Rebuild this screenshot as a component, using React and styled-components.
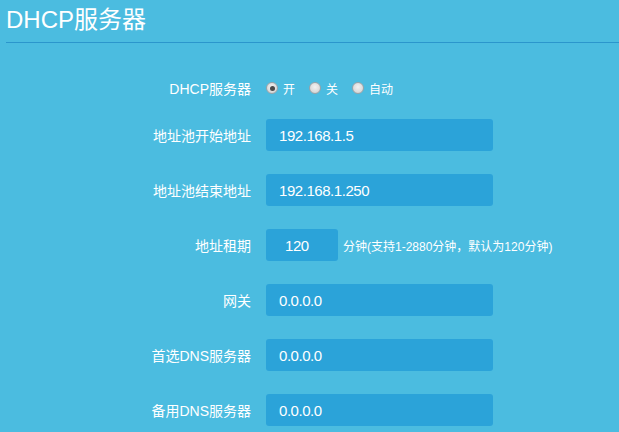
import React from "react";
import styled, { createGlobalStyle } from "styled-components";

const Global = createGlobalStyle`
  html, body { margin: 0; padding: 0; background: #4bbce0; }
  body { font-family: "Liberation Sans", "Noto Sans CJK SC", sans-serif; color: #fff; }
`;

const Page = styled.div`
  width: 619px;
  height: 432px;
  background: #4bbce0;
  overflow: hidden;
`;

const Header = styled.div`
  margin-left: 6px;
  height: 43px;
  border-bottom: 1px solid #2b96cc;
  box-sizing: border-box;
  display: flex;
  align-items: center;
`;

const Title = styled.h1`
  margin: 0;
  font-size: 24px;
  font-weight: normal;
  line-height: 1;
  padding-bottom: 3px;
  font-family: "Liberation Sans", "Noto Sans CJK SC", sans-serif;
`;

const Form = styled.div`
  display: flex;
  flex-direction: column;
  gap: 23px;
  padding-top: 29px;
`;

const Row = styled.div`
  display: grid;
  grid-template-columns: 251px 1fr;
  column-gap: 15px;
  align-items: center;
  height: 32px;
  margin-bottom: ${(p) => (p.$short ? "-8px" : "0")};
`;

const Label = styled.div`
  text-align: right;
  font-size: 14px;
  white-space: nowrap;
`;

const Field = styled.div`
  display: flex;
  align-items: center;
  gap: 5px;
`;

const Input = styled.div`
  box-sizing: border-box;
  width: ${(p) => p.$w}px;
  height: 32px;
  background: #2ba3d9;
  border-radius: 3px;
  display: flex;
  align-items: center;
  padding-left: ${(p) => p.$pl || 13}px;
  font-size: 15px;
  letter-spacing: -0.45px;
  color: #fff;
`;

const Hint = styled.span`
  font-size: 12px;
  white-space: nowrap;
`;

const RadioGroup = styled.div`
  display: flex;
  align-items: center;
`;

const RadioItem = styled.label`
  display: flex;
  align-items: center;
  font-size: 12px;
  margin-right: 14px;
`;

const Dot = styled.span`
  box-sizing: border-box;
  width: 12px;
  height: 12px;
  border-radius: 50%;
  border: 1px solid #9aa3a8;
  background: radial-gradient(circle at 50% 40%, #f2f2f2 0%, #dcdcdc 60%, #c8c8c8 100%);
  display: flex;
  align-items: center;
  justify-content: center;
  margin-right: 5px;
  &::after {
    content: "";
    width: 5px;
    height: 5px;
    border-radius: 50%;
    background: ${(p) => (p.$on ? "#4a4a4a" : "transparent")};
  }
`;

const fields = [
  { label: "地址池开始地址", value: "192.168.1.5" },
  { label: "地址池结束地址", value: "192.168.1.250" },
  { label: "地址租期", value: "120", lease: true },
  { label: "网关", value: "0.0.0.0" },
  { label: "首选DNS服务器", value: "0.0.0.0" },
  { label: "备用DNS服务器", value: "0.0.0.0" },
];

export default function App() {
  return (
    <Page>
      <Global />
      <Header>
        <Title>DHCP服务器</Title>
      </Header>
      <Form>
        <Row $short>
          <Label>DHCP服务器</Label>
          <RadioGroup>
            <RadioItem><Dot $on />开</RadioItem>
            <RadioItem><Dot />关</RadioItem>
            <RadioItem><Dot />自动</RadioItem>
          </RadioGroup>
        </Row>
        {fields.map((f) => (
          <Row key={f.label}>
            <Label>{f.label}</Label>
            <Field>
              {f.lease ? (
                <>
                  <Input $w={72} $pl={19}>{f.value}</Input>
                  <Hint>分钟(支持1-2880分钟，默认为120分钟)</Hint>
                </>
              ) : (
                <Input $w={227}>{f.value}</Input>
              )}
            </Field>
          </Row>
        ))}
      </Form>
    </Page>
  );
}
